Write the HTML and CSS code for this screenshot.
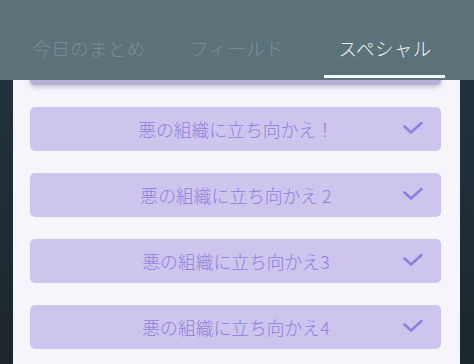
FILE: index.html
```html
<!DOCTYPE html>
<html lang="ja">
<head>
<meta charset="utf-8">
<link rel="stylesheet" href="styles.css">
</head>
<body>
<header class="appbar">
  <nav class="tabs">
    <div class="tab">今日のまとめ</div>
    <div class="tab">フィールド</div>
    <div class="tab active">スペシャル</div>
  </nav>
</header>
<main class="stage">
  <section class="panel">
    <ul class="list">
      <li class="card peek"></li>
      <li class="card"><span class="label">悪の組織に立ち向かえ！</span><svg class="check" viewBox="0 0 20 12"><path d="M1.5 4.5 L8 10.5 L18.5 1"/></svg></li>
      <li class="card"><span class="label">悪の組織に立ち向かえ 2</span><svg class="check" viewBox="0 0 20 12"><path d="M1.5 4.5 L8 10.5 L18.5 1"/></svg></li>
      <li class="card"><span class="label">悪の組織に立ち向かえ3</span><svg class="check" viewBox="0 0 20 12"><path d="M1.5 4.5 L8 10.5 L18.5 1"/></svg></li>
      <li class="card"><span class="label">悪の組織に立ち向かえ4</span><svg class="check" viewBox="0 0 20 12"><path d="M1.5 4.5 L8 10.5 L18.5 1"/></svg></li>
    </ul>
  </section>
</main>
</body>
</html>
```

FILE: styles.css
```css
* { box-sizing: border-box; }
html, body { margin: 0; padding: 0; }
body {
  width: 474px;
  height: 364px;
  overflow: hidden;
  background: linear-gradient(180deg, #263543 0%, #1f2c36 60%, #1b272b 100%);
  font-family: "Noto Sans CJK JP", "Noto Sans", sans-serif;
}
.appbar {
  position: relative;
  z-index: 2;
  height: 80px;
  background: #5b7279;
  display: flex;
  align-items: flex-end;
}
.tabs {
  display: flex;
  width: 100%;
  padding: 0 15px;
}
.tab {
  flex: 1;
  height: 48px;
  display: flex;
  align-items: flex-start;
  justify-content: center;
  padding-top: 2px;
  font-size: 18.5px;
  font-weight: 300;
  line-height: 28px;
  color: #7b9096;
  letter-spacing: 0.4px;
  position: relative;
}
.tab.active {
  color: #eef1f2;
}
.tab.active::after {
  content: "";
  position: absolute;
  left: 13px;
  right: 14px;
  bottom: 2px;
  height: 3px;
  background: #f4f7f8;
}
.stage {
  padding: 0 14px 0 13px;
  height: 284px;
}
.panel {
  height: 284px;
  background: #f6f5fb;
  overflow: hidden;
  padding: 0 19px 0 17px;
}
.list {
  list-style: none;
  margin: -39px 0 0;
  padding: 0;
  display: flex;
  flex-direction: column;
  gap: 22px;
}
.card {
  height: 44px;
  border-radius: 5px;
  background: #cdc5ee;
  display: flex;
  align-items: center;
  justify-content: center;
  position: relative;
}
.card.peek {
  background: #b8b0d6;
  box-shadow: 0 2px 5px rgba(90, 80, 130, 0.35);
}
.label {
  font-size: 17.8px;
  font-weight: 300;
  line-height: 24px;
  color: #8f7fdd;
  margin-left: 1px;
}
.check {
  position: absolute;
  right: 18px;
  top: 15px;
  width: 20px;
  height: 12px;
  fill: none;
  stroke: #8f7fdd;
  stroke-width: 2.6;
  stroke-linecap: round;
  stroke-linejoin: round;
}
```
